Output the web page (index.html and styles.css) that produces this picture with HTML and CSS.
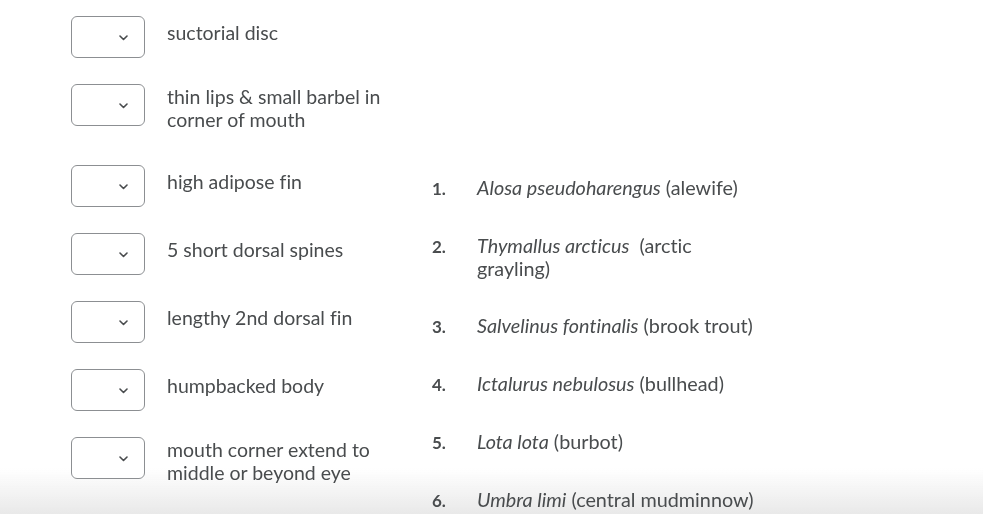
FILE: index.html
```html
<!DOCTYPE html>
<html lang="en">
<head>
  <meta charset="UTF-8">
  <title>Matching</title>
  <meta name="viewport" content="width=device-width, initial-scale=1.0">
  <link rel="stylesheet" href="styles.css">
</head>
<body>
  <div class="fade"></div>
  <div class="page">
    <div class="match-list">
      <div class="match-row">
        <div class="dropdown"><svg width="9" height="6" viewBox="0 0 9 6"><path d="M1 1l3.5 3.5L8 1" fill="none" stroke="#494c4e" stroke-width="1.6" stroke-linecap="round" stroke-linejoin="round"/></svg></div>
        <div class="match-text">suctorial disc</div>
      </div>
      <div class="match-row two-line">
        <div class="dropdown"><svg width="9" height="6" viewBox="0 0 9 6"><path d="M1 1l3.5 3.5L8 1" fill="none" stroke="#494c4e" stroke-width="1.6" stroke-linecap="round" stroke-linejoin="round"/></svg></div>
        <div class="match-text">thin lips &amp; small barbel in corner of mouth</div>
      </div>
      <div class="match-row">
        <div class="dropdown"><svg width="9" height="6" viewBox="0 0 9 6"><path d="M1 1l3.5 3.5L8 1" fill="none" stroke="#494c4e" stroke-width="1.6" stroke-linecap="round" stroke-linejoin="round"/></svg></div>
        <div class="match-text">high adipose fin</div>
      </div>
      <div class="match-row">
        <div class="dropdown"><svg width="9" height="6" viewBox="0 0 9 6"><path d="M1 1l3.5 3.5L8 1" fill="none" stroke="#494c4e" stroke-width="1.6" stroke-linecap="round" stroke-linejoin="round"/></svg></div>
        <div class="match-text">5 short dorsal spines</div>
      </div>
      <div class="match-row">
        <div class="dropdown"><svg width="9" height="6" viewBox="0 0 9 6"><path d="M1 1l3.5 3.5L8 1" fill="none" stroke="#494c4e" stroke-width="1.6" stroke-linecap="round" stroke-linejoin="round"/></svg></div>
        <div class="match-text">lengthy 2nd dorsal fin</div>
      </div>
      <div class="match-row">
        <div class="dropdown"><svg width="9" height="6" viewBox="0 0 9 6"><path d="M1 1l3.5 3.5L8 1" fill="none" stroke="#494c4e" stroke-width="1.6" stroke-linecap="round" stroke-linejoin="round"/></svg></div>
        <div class="match-text">humpbacked body</div>
      </div>
      <div class="match-row two-line">
        <div class="dropdown"><svg width="9" height="6" viewBox="0 0 9 6"><path d="M1 1l3.5 3.5L8 1" fill="none" stroke="#494c4e" stroke-width="1.6" stroke-linecap="round" stroke-linejoin="round"/></svg></div>
        <div class="match-text">mouth corner extend to middle or beyond eye</div>
      </div>
    </div>

    <ol class="answer-list">
      <li><span class="num">1.</span><span class="answer"><i>Alosa pseudoharengus</i> (alewife)</span></li>
      <li><span class="num">2.</span><span class="answer"><i>Thymallus arcticus</i> &nbsp;(arctic grayling)</span></li>
      <li><span class="num">3.</span><span class="answer"><i>Salvelinus fontinalis</i> (brook trout)</span></li>
      <li><span class="num">4.</span><span class="answer"><i>Ictalurus nebulosus</i> (bullhead)</span></li>
      <li><span class="num">5.</span><span class="answer"><i>Lota lota</i> (burbot)</span></li>
      <li><span class="num">6.</span><span class="answer"><i>Umbra limi</i> (central mudminnow)</span></li>
    </ol>
  </div>
</body>
</html>
```

FILE: styles.css
```css
body {
  margin: 0;
  background: #fff;
  color: #494c4e;
  font-family: Lato, 'Open Sans', Arial, sans-serif;
  font-size: 19.5px;
  line-height: 23px;
  font-variant-ligatures: none;
}
.page {
  position: relative;
  z-index: 1;
  display: flex;
  align-items: flex-start;
  gap: 35px;
  padding: 16px 0 0 71px;
}
.match-list {
  display: flex;
  flex-direction: column;
  gap: 26px;
}
.match-row {
  display: flex;
  align-items: flex-start;
  gap: 22px;
}
.dropdown {
  width: 74px;
  height: 42px;
  box-sizing: border-box;
  border: 1px solid #8c8f92;
  border-radius: 6px;
  background: #fff;
  display: flex;
  align-items: center;
  justify-content: flex-end;
  padding: 2px 16px 0 0;
  flex-shrink: 0;
}
.dropdown svg {
  display: block;
}
.match-text {
  width: 230px;
  padding: 5px 0 8px;
}
.two-line .match-text {
  padding-top: 1px;
}
.answer-list {
  list-style: none;
  margin: 160px 0 0;
  padding: 0;
  display: flex;
  flex-direction: column;
  gap: 34px;
  font-size: 19.8px;
}
.answer-list li {
  display: flex;
  align-items: baseline;
}
.num {
  width: 45px;
  font-weight: 700;
  font-size: 17px;
}
.answer {
  width: 284px;
}
.fade {
  position: fixed;
  z-index: 0;
  left: 0;
  right: 0;
  bottom: 0;
  height: 46px;
  background: linear-gradient(to bottom, rgba(235,235,235,0), #e9e9e9);
}
```
